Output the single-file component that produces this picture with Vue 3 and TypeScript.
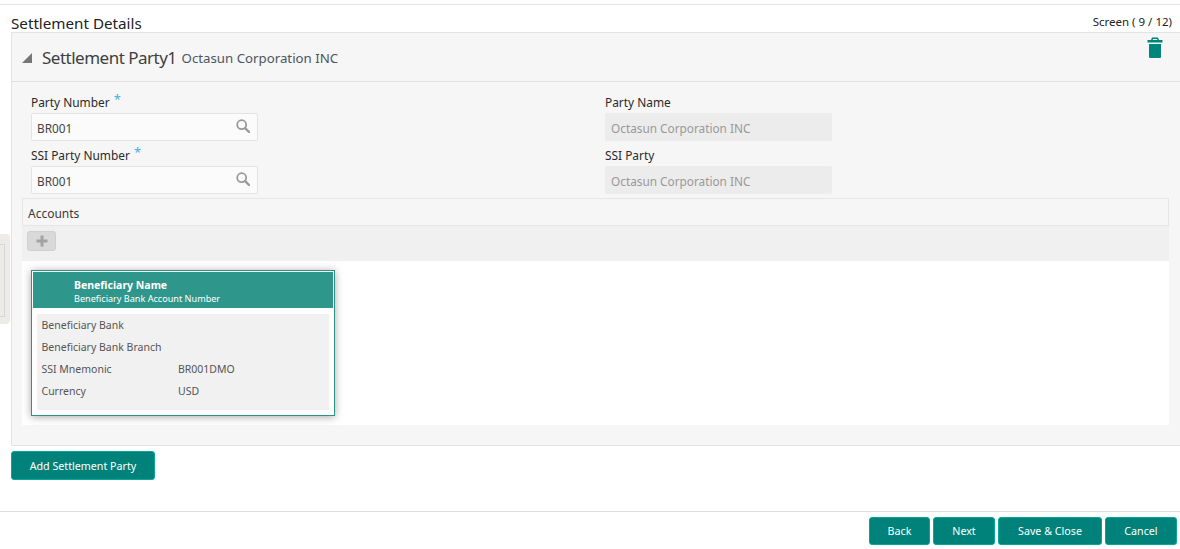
<script setup lang="ts">
interface Row { label: string; value: string }
const rows: Row[] = [
  { label: 'Beneficiary Bank', value: '' },
  { label: 'Beneficiary Bank Branch', value: '' },
  { label: 'SSI Mnemonic', value: 'BR001DMO' },
  { label: 'Currency', value: 'USD' },
]
const actions: { label: string; cls: string }[] = [
  { label: 'Back', cls: 'w-back' },
  { label: 'Next', cls: 'w-next' },
  { label: 'Save & Close', cls: 'w-save' },
  { label: 'Cancel', cls: 'w-cancel' },
]
</script>

<template>
  <div class="page">
    <div class="handle"><div class="handle-inner"></div></div>
    <div class="title-row">
      <span class="title">Settlement Details</span>
      <span class="screen">Screen ( 9 / 12)</span>
    </div>
    <section class="panel">
      <header class="panel-head">
        <span class="tri"></span>
        <span class="party">Settlement Party1</span>
        <span class="corp">Octasun Corporation INC</span>
        <svg class="trash" width="16" height="21" viewBox="0 0 16 21">
          <path fill="#00857c" d="M5 0.500h6l1 2.500h3.500v2.500H0.500V3H4zM6 2l-.4 1h4.800L10 2z" />
          <path fill="#00857c" d="M2 7h12v13a1 1 0 0 1-1 1H3a1 1 0 0 1-1-1z" />
        </svg>
      </header>
      <div class="form">
        <div class="field">
          <label class="lab lab-first">Party Number <span class="req">*</span></label>
          <div class="input">
            <span>BR001</span>
            <svg class="mag" width="14" height="14" viewBox="0 0 14 14">
              <circle cx="5.700" cy="5.700" r="4.500" fill="none" stroke="#999" stroke-width="1.800" />
              <path d="M9 9l4 4" stroke="#999" stroke-width="2.400" stroke-linecap="round" />
            </svg>
          </div>
        </div>
        <div class="field">
          <label class="lab lab-first">Party Name</label>
          <div class="input off">Octasun Corporation INC</div>
        </div>
        <div class="field">
          <label class="lab">SSI Party Number <span class="req">*</span></label>
          <div class="input">
            <span>BR001</span>
            <svg class="mag" width="14" height="14" viewBox="0 0 14 14">
              <circle cx="5.700" cy="5.700" r="4.500" fill="none" stroke="#999" stroke-width="1.800" />
              <path d="M9 9l4 4" stroke="#999" stroke-width="2.400" stroke-linecap="round" />
            </svg>
          </div>
        </div>
        <div class="field">
          <label class="lab">SSI Party</label>
          <div class="input off">Octasun Corporation INC</div>
        </div>
      </div>
      <div class="accounts">
        <div class="acc-head">Accounts</div>
        <div class="toolbar">
          <button class="add" type="button">
            <svg width="12" height="12" viewBox="0 0 12 12">
              <path d="M4.500 0.500h3v4h4v3h-4v4h-3v-4h-4v-3h4z" fill="#a3a3a3" />
            </svg>
          </button>
        </div>
        <div class="acc-body">
          <article class="card">
            <div class="card-head">
              <div class="card-name">Beneficiary Name</div>
              <div class="card-acc">Beneficiary Bank Account Number</div>
            </div>
            <div class="card-body">
              <div v-for="r in rows" :key="r.label" class="row">
                <span class="row-label">{{ r.label }}</span>
                <span>{{ r.value }}</span>
              </div>
            </div>
          </article>
        </div>
      </div>
    </section>
    <button class="btn add-party" type="button">Add Settlement Party</button>
    <footer class="foot">
      <button v-for="a in actions" :key="a.label" class="btn" :class="a.cls" type="button">{{ a.label }}</button>
    </footer>
  </div>
</template>

<style>
html, body { margin: 0; background: #fff; }
</style>

<style scoped>
.page {
  position: relative;
  width: 1180px;
  height: 549px;
  overflow: hidden;
  box-sizing: border-box;
  padding-top: 4px;
  background: #fff;
  font-family: "Noto Sans", "Open Sans", sans-serif;
  color: #2c2c2c;
  display: flex;
  flex-direction: column;
}
.handle {
  position: absolute;
  left: -6px;
  top: 234px;
  width: 16px;
  height: 90px;
  box-sizing: border-box;
  background: #ecebe8;
  border-radius: 4px;
  padding: 10px 0 6px;
}
.handle-inner {
  width: 11px;
  height: 73px;
  border: 1px solid #d6d6d6;
  box-sizing: border-box;
}
.title-row {
  border-top: 1px solid #dfe5e8;
  height: 28px;
  box-sizing: border-box;
  padding: 8px 8px 0 11px;
  display: flex;
  justify-content: space-between;
  align-items: flex-start;
  flex: none;
}
.title { font-size: 15.200px; line-height: 20px; color: #222; }
.screen { font-size: 11.500px; line-height: 18px; color: #222; }
.panel {
  margin-left: 11px;
  height: 414px;
  box-sizing: border-box;
  background: #f6f6f6;
  border-top: 1px solid #e3e3e3;
  border-left: 1px solid #e3e3e3;
  border-bottom: 1px solid #e3e3e3;
  flex: none;
}
.panel-head {
  position: relative;
  height: 49px;
  box-sizing: border-box;
  border-bottom: 1px solid #e0e0e0;
  display: flex;
  align-items: center;
  padding: 1px 0 0 10px;
}
.tri {
  width: 0;
  height: 0;
  border-left: 10px solid transparent;
  border-bottom: 10px solid #777;
  margin: 0 10px 0 0;
}
.party { font-size: 17px; letter-spacing: -0.500px; color: #3f3f3f; margin-right: 5px; }
.corp { font-size: 13.250px; color: #4c5560; margin-top: 1px; }
.trash { position: absolute; right: 17px; top: 4px; }
.form {
  display: grid;
  grid-template-columns: 227px 227px;
  grid-template-rows: 59px 53px;
  column-gap: 347px;
  padding-left: 19px;
  height: 115px;
  align-content: start;
}
.field { display: flex; flex-direction: column; }
.lab {
  font-size: 11.900px;
  line-height: 16px;
  height: 25px;
  padding-top: 6px;
  box-sizing: border-box;
  color: #2a2a2a;
}
.lab-first { height: 31px; padding-top: 12px; }
.req { color: #45b1e0; font-size: 13px; vertical-align: 3px; line-height: 10px; margin-left: 1px; }
.input {
  height: 28px;
  box-sizing: border-box;
  background: #fbfbfb;
  border: 1px solid #e4e4e4;
  border-radius: 2px;
  padding: 2px 6px 0 5px;
  display: flex;
  align-items: center;
  justify-content: space-between;
  font-size: 11.800px;
  color: #444;
}
.input.off {
  background: #ececec;
  border-color: #ececec;
  color: #999;
}
.mag { margin: -5px 1px 0 0; }
.accounts { margin: 1px 0 0 10px; width: 1147px; }
.acc-head {
  height: 28px;
  box-sizing: border-box;
  border: 1px solid #e6e6e6;
  padding-left: 5px;
  font-size: 12px;
  line-height: 29px;
  color: #3a3a3a;
}
.toolbar {
  height: 35px;
  box-sizing: border-box;
  background: #f0f0f0;
  padding: 5px 0 0 5px;
}
.add {
  display: flex;
  align-items: center;
  justify-content: center;
  width: 29px;
  height: 20px;
  padding: 0;
  background: #d9d9d9;
  border: 1px solid #cfcfcf;
  border-radius: 3px;
}
.acc-body {
  height: 164px;
  background: #fff;
  padding: 9px 0 0 9px;
  box-sizing: border-box;
}
.card {
  width: 304px;
  height: 146px;
  box-sizing: border-box;
  background: #fff;
  border: 1px solid #2b9488;
  box-shadow: 0 1px 8px rgba(0, 0, 0, 0.35);
  padding: 1px;
}
.card-head {
  height: 36px;
  background: #2e968b;
  color: #fff;
  padding: 6px 0 0 41px;
  box-sizing: border-box;
}
.card-name { font-size: 10.500px; font-weight: 700; line-height: 14px; }
.card-acc { font-size: 9.100px; line-height: 13px; }
.card-body {
  margin: 6px 4px 0;
  height: 96px;
  box-sizing: border-box;
  background: #f1f1f1;
}
.row {
  display: flex;
  height: 22px;
  align-items: center;
  padding-left: 4.500px;
  font-size: 10.500px;
  color: #555;
}
.row-label { width: 136.500px; flex: none; }
.btn {
  background: #00827a;
  border: 1px solid #00a99a;
  border-radius: 3px;
  color: #fff;
  font-family: inherit;
  font-size: 10.700px;
  height: 28px;
  padding: 0;
  box-sizing: border-box;
}
.add-party {
  width: 144px;
  height: 29px;
  margin: 5px 0 0 11px;
  flex: none;
}
.foot {
  margin-top: 31px;
  border-top: 1px solid #dedede;
  padding: 5px 3px 0 0;
  display: flex;
  justify-content: flex-end;
  gap: 3px;
  flex: none;
}
.w-back { width: 61px; }
.w-next { width: 62px; }
.w-save { width: 104px; }
.w-cancel { width: 72px; }
</style>
